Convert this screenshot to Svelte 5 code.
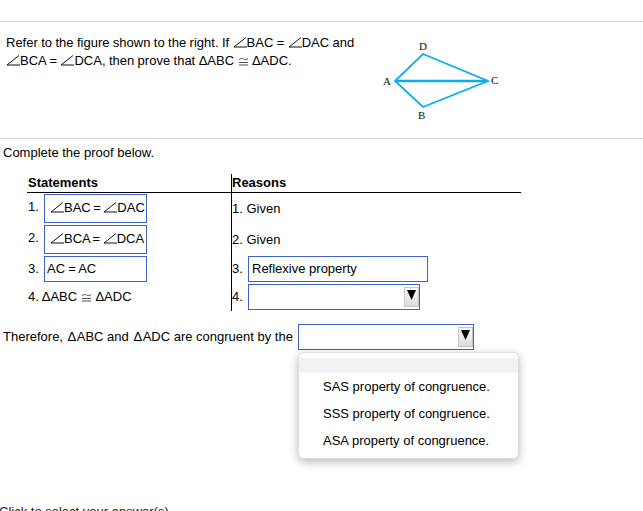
<script>
  const rows = [
    { n: '1.', a: 'BAC', b: 'DAC', reason: '1. Given' },
    { n: '2.', a: 'BCA', b: 'DCA', reason: '2. Given' }
  ];
  const options = ['SAS property of congruence.', 'SSS property of congruence.', 'ASA property of congruence.'];
</script>

{#snippet ang()}<svg class="ang" width="14" height="11" viewBox="0 0 14 11"><path d="M13 .5 L1 10 H14" fill="none" stroke="#111" stroke-width="1"/></svg>{/snippet}
{#snippet tri()}<span class="tri">&#916;</span>{/snippet}
{#snippet cong()}<svg class="cong" width="11" height="10" viewBox="0 0 11 10"><path d="M1 3 C3 1 4 1 5.500 2 S8.500 3 10 1.500 M1 5.500 H10 M1 8 H10" fill="none" stroke="#222" stroke-width="0.8"/></svg>{/snippet}
{#snippet arrow()}<span class="arrow"><svg width="9" height="10" viewBox="0 0 9 10"><path d="M0 0 H9 L4.500 10 Z" fill="#000"/></svg></span>{/snippet}

<div class="page">
  <section class="problem">
    <p class="question">
      Refer to the figure shown to the right. If {@render ang()}BAC = {@render ang()}DAC and<br />
      {@render ang()}BCA = {@render ang()}DCA, then prove that {@render tri()}ABC {@render cong()} {@render tri()}ADC.
    </p>
    <svg class="figure" width="130" height="90" viewBox="0 0 130 90">
      <path d="M13 42 L41 15 L106 42 L41 68 Z" fill="none" stroke="#0aaef0" stroke-width="1.800"/>
      <path d="M13 42 H106" fill="none" stroke="#0aaef0" stroke-width="2.400"/>
      <text x="37" y="11">D</text>
      <text x="1" y="46">A</text>
      <text x="109" y="45">C</text>
      <text x="36" y="80">B</text>
    </svg>
  </section>

  <section class="proof">
    <p class="lead">Complete the proof below.</p>
    <div class="table">
      <div class="head left">Statements</div>
      <div class="head right">Reasons</div>

      {#each rows as r}
        <div class="cell left"><span class="num">{r.n}</span><span class="box stmt">{@render ang()}{r.a} = {@render ang()}{r.b}</span></div>
        <div class="cell right plain">{r.reason}</div>
      {/each}

      <div class="cell left"><span class="num">3.</span><span class="box stmt three">AC = AC</span></div>
      <div class="cell right"><span class="rn">3.</span><span class="box reason">Reflexive property</span></div>

      <div class="cell left last"><span class="num four">4. {@render tri()}ABC {@render cong()} {@render tri()}ADC</span></div>
      <div class="cell right last"><span class="rn">4.</span><span class="box select s4">{@render arrow()}</span></div>
    </div>

    <div class="therefore">
      <span class="tf">Therefore, {@render tri()}ABC and {@render tri()}ADC are congruent by the</span>
      <span class="box select s5">{@render arrow()}</span>
    </div>
    <ul class="menu">
      <li class="blank"></li>
      {#each options as o}<li>{o}</li>{/each}
    </ul>
  </section>
  <p class="hint">Click to select your answer(s).</p>
</div>

<style>
  :global(body) { margin: 0; background: #fff; overflow: hidden; }
  .page {
    position: relative; width: 643px; height: 511px; overflow: hidden;
    font-family: "Liberation Sans", Arial, sans-serif; font-size: 13px; color: #000; line-height: 18px;
  }
  .problem {
    margin-top: 21px; height: 118px; box-sizing: border-box;
    border-top: 1px solid #d2d5e0; border-bottom: 1px solid #d2d5e0;
    display: flex;
  }
  .question { margin: 12px 0 0 6px; width: 376px; height: 39px; word-spacing: -0.2px; }
  .figure { margin-top: 17px; overflow: visible; flex: none; }
  .figure text { font: 11px "Liberation Serif", serif; fill: #111; }
  .ang { vertical-align: -1px; }
  .cong { vertical-align: -2px; }
  .tf .tri { margin: 0 .5px 0 1px; }
  .lead { margin: 5px 0 0 3px; }
  .table {
    margin: 12px 0 0 27px; width: 494px;
    display: grid; grid-template-columns: 204px 290px;
    grid-template-rows: 19px 31px 31px 28px 28px;
  }
  .head { font-weight: bold; border-bottom: 1px solid #000; box-sizing: border-box; line-height: 16px; padding-top: 1px; }
  .head.left { padding-left: 1px; }
  .right { border-left: 1px solid #000; display: flex; align-items: flex-start; }
  .cell { display: flex; align-items: flex-start; box-sizing: border-box; padding-top: 1px; }
  .num { width: 17px; flex: none; margin-top: 4px; white-space: nowrap; padding-left: 1px; box-sizing: border-box; }
  .plain { padding-top: 7px; }
  .box { border: 1px solid #3d61cf; box-sizing: border-box; display: block; background: #fff; }
  .stmt { width: 103px; height: 29px; padding: 4px 0 0 5px; white-space: nowrap; word-spacing: -1.100px; }
  .stmt.three { height: 26px; padding: 3px 0 0 2px; word-spacing: -0.500px; }
  .rn { width: 16px; flex: none; margin-top: 4px; }
  .reason { width: 180px; height: 26px; padding: 3px 0 0 3px; }
  .select { position: relative; height: 26px; }
  .s4 { width: 172px; }
  .s5 { width: 176px; flex: none; }
  .arrow {
    position: absolute; right: 0; top: 2px; width: 15px; height: 20px; box-sizing: border-box;
    background: linear-gradient(#fafafa, #dcdcdc); border: 1px solid #c6c6c6;
    display: flex; justify-content: center; padding-top: 2px;
  }
  .therefore { margin: 13px 0 0 3px; display: flex; align-items: center; }
  .tf { width: 295px; flex: none; white-space: nowrap; }
  .menu {
    position: absolute; left: 298px; top: 352px; width: 221px; height: 107px;
    margin: 0; padding: 5px 0 0; list-style: none; box-sizing: border-box; background: #fff;
    border-radius: 6px; border: 1px solid #dcdcdc;
    box-shadow: 0 3px 10px rgba(0,0,0,.28);
  }
  .menu li { height: 27px; line-height: 27px; padding-left: 24px; white-space: nowrap; }
  .menu li.blank { height: 15px; background: #f2f2f2; }
  .hint { position: absolute; left: -1px; top: 503px; margin: 0; color: #222; }
</style>
